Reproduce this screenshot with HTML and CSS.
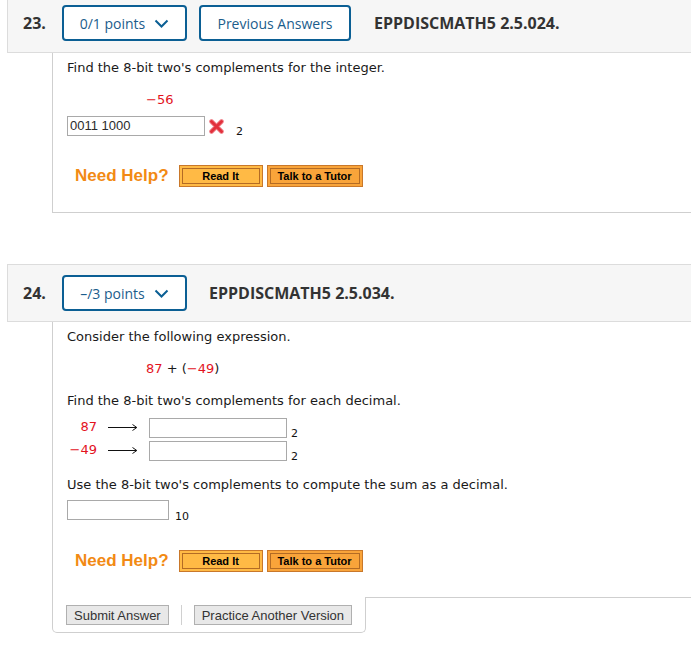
FILE: index.html
```html
<!DOCTYPE html>
<html>
<head>
<meta charset="utf-8">
<link rel="stylesheet" href="styles.css">
</head>
<body>
<div class="page">

  <div class="question first">
    <div class="qhead">
      <span class="qnum">23.</span>
      <button class="hbtn pts">0/1 points <svg class="chev" width="15" height="9" viewBox="0 0 15 9"><path d="M1.5 1.5 L7.5 7.5 L13.5 1.5" fill="none" stroke="#0b5f94" stroke-width="2"/></svg></button>
      <button class="hbtn prev">Previous Answers</button>
      <span class="qcode">EPPDISCMATH5 2.5.024.</span>
    </div>
    <div class="qbody closed">
      <p class="line">Find the 8-bit two's complements for the integer.</p>
      <p class="line indent red">&minus;56</p>
      <div class="ansrow">
        <div class="inp filled">0011 1000</div>
        <svg class="xmark" width="15" height="15" viewBox="0 0 15 15"><path d="M2.5 2.5 L12.5 12.5 M12.5 2.5 L2.5 12.5" stroke="#f08890" stroke-width="4.6" stroke-linecap="round"/><path d="M2.5 2.5 L12.5 12.5 M12.5 2.5 L2.5 12.5" stroke="#e2303c" stroke-width="3" stroke-linecap="round"/></svg>
        <span class="sub wide">2</span>
      </div>
      <div class="help">
        <span class="needhelp">Need Help?</span>
        <span class="obtn read"><span>Read It</span></span>
        <span class="obtn tutor"><span>Talk to a Tutor</span></span>
      </div>
    </div>
  </div>

  <div class="question second">
    <div class="qhead">
      <span class="qnum">24.</span>
      <button class="hbtn pts">&ndash;/3 points <svg class="chev" width="15" height="9" viewBox="0 0 15 9"><path d="M1.5 1.5 L7.5 7.5 L13.5 1.5" fill="none" stroke="#0b5f94" stroke-width="2"/></svg></button>
      <span class="qcode">EPPDISCMATH5 2.5.034.</span>
    </div>
    <div class="qbody">
      <p class="line">Consider the following expression.</p>
      <p class="line indent"><span class="red">87</span> + (<span class="red">&minus;49</span>)</p>
      <p class="line">Find the 8-bit two's complements for each decimal.</p>
      <div class="convrows">
        <div class="conv">
          <span class="lbl red">87</span>
          <svg class="arrow" width="30" height="9" viewBox="0 0 30 9"><path d="M0 4.5 H28.5 M24.5 1.5 L28.8 4.5 L24.5 7.5" fill="none" stroke="#111" stroke-width="1"/></svg>
          <div class="inp"></div>
          <span class="sub">2</span>
        </div>
        <div class="conv">
          <span class="lbl red">&minus;49</span>
          <svg class="arrow" width="30" height="9" viewBox="0 0 30 9"><path d="M0 4.5 H28.5 M24.5 1.5 L28.8 4.5 L24.5 7.5" fill="none" stroke="#111" stroke-width="1"/></svg>
          <div class="inp"></div>
          <span class="sub">2</span>
        </div>
      </div>
      <p class="line use">Use the 8-bit two's complements to compute the sum as a decimal.</p>
      <div class="ansrow sumrow">
        <div class="inp short"></div>
        <span class="sub">10</span>
      </div>
      <div class="help help2">
        <span class="needhelp">Need Help?</span>
        <span class="obtn read"><span>Read It</span></span>
        <span class="obtn tutor"><span>Talk to a Tutor</span></span>
      </div>
    </div>
    <div class="qfoot">
      <div class="tab">
        <span class="gbtn">Submit Answer</span>
        <span class="sep"></span>
        <span class="gbtn">Practice Another Version</span>
      </div>
      <div class="rest"></div>
    </div>
  </div>

</div>
</body>
</html>
```

FILE: styles.css
```css
html, body {
  margin: 0;
  padding: 0;
  background: #fff;
  overflow: hidden;
}

.page {
  padding-left: 7px;
}

.question.first {
  margin-top: -5px;
}

.question.second {
  margin-top: 51px;
}

.qhead {
  display: flex;
  align-items: center;
  height: 56px;
  box-sizing: content-box;
  background: #f6f6f6;
  border: 1px solid #dcdcdc;
  border-right: none;
  padding-left: 15px;
  font-family: "Open Sans", sans-serif;
}

.question.first .qhead {
  height: 54px;
  padding-bottom: 2px;
}

.qnum {
  font-weight: bold;
  font-size: 16px;
  color: #333;
  width: 22px;
  margin-right: 17px;
}

.hbtn {
  display: flex;
  align-items: center;
  justify-content: center;
  height: 36px;
  box-sizing: border-box;
  border: 2px solid #0b5f94;
  border-radius: 4px;
  background: #fff;
  color: #1b5d8c;
  font-family: "Open Sans", sans-serif;
  font-size: 14px;
  padding: 0;
  margin-right: 12px;
}

.hbtn.pts {
  width: 125px;
}

.question.second .hbtn.pts {
  margin-right: 22px;
}

.chev {
  margin-left: 9px;
  margin-top: 1px;
}

.hbtn.prev {
  width: 152px;
  margin-right: 23px;
}

.qcode {
  font-weight: bold;
  font-size: 16px;
  color: #333;
}

.qbody {
  margin-left: 45px;
  border-left: 1px solid #cfcfcf;
  padding-left: 14px;
  padding-top: 7px;
  padding-bottom: 25px;
  font-family: Verdana, "DejaVu Sans", sans-serif;
  font-size: 13px;
  color: #1a1a1a;
}

.qbody.closed {
  border-bottom: 1px solid #cfcfcf;
}

.line {
  margin: 0 0 16px 0;
  line-height: 16px;
  white-space: nowrap;
}

.indent {
  padding-left: 79px;
}

.red {
  color: #e3131e;
}

.ansrow {
  display: flex;
  align-items: flex-start;
  height: 20px;
  margin-top: -8px;
}

.inp {
  width: 138px;
  height: 20px;
  box-sizing: border-box;
  border: 1px solid #a9a9a9;
  background: #fff;
}

.inp.filled {
  font-family: "Liberation Sans", Arial, sans-serif;
  font-size: 13px;
  line-height: 18px;
  color: #2b2b2b;
  padding-left: 2px;
}

.inp.short {
  width: 102px;
}

.xmark {
  margin-left: 4px;
  margin-top: 3px;
}

.sub {
  font-size: 11px;
  line-height: 12px;
  margin-left: 4px;
  margin-top: 10px;
  color: #111;
}

.sub.wide {
  margin-left: 12px;
}

.help {
  display: flex;
  align-items: center;
  margin-top: 29px;
  padding-left: 8px;
}

.help2 {
  margin-top: 30px;
}

.needhelp {
  font-family: "Liberation Sans", Arial, sans-serif;
  font-weight: bold;
  font-size: 17px;
  color: #f28a14;
  margin-right: 10px;
}

.obtn {
  display: flex;
  height: 22px;
  box-sizing: border-box;
  border: 1px solid #c9782a;
  padding: 2px;
  margin-right: 4px;
  background: #ffba45;
}

.obtn span {
  display: flex;
  align-items: center;
  justify-content: center;
  flex: 1;
  border: 1px solid #b36b24;
  font-family: "Liberation Sans", Arial, sans-serif;
  font-weight: bold;
  font-size: 11px;
  color: #000;
}

.obtn.read {
  width: 84px;
}

.obtn.tutor {
  width: 96px;
  background: #f9a43a;
}

.convrows {
  margin-top: -7px;
  display: flex;
  flex-direction: column;
  gap: 3px;
}

.conv {
  display: flex;
  align-items: flex-start;
  height: 20px;
}

.lbl {
  width: 30px;
  text-align: right;
  line-height: 16px;
  margin-top: 1px;
}

.arrow {
  margin-left: 11px;
  margin-top: 5px;
  margin-right: 11px;
}

.line.use {
  margin-top: 16px;
}

.sumrow {
  margin-top: -9px;
}

.sumrow .sub {
  margin-left: 6px;
  margin-top: 11px;
}

.qfoot {
  display: flex;
  margin-left: 45px;
}

.tab {
  display: flex;
  align-items: center;
  border: 1px solid #cfcfcf;
  border-top: none;
  border-radius: 0 0 5px 5px;
  padding: 8px 13px 7px 13px;
}

.rest {
  flex: 1;
  border-top: 1px solid #cfcfcf;
}

.gbtn {
  display: flex;
  align-items: center;
  height: 20px;
  box-sizing: border-box;
  padding: 0 7px;
  background: #e8e8e8;
  border: 1px solid #b0b0b0;
  font-family: "Liberation Sans", Arial, sans-serif;
  font-size: 13px;
  color: #333;
}

.sep {
  width: 1px;
  height: 20px;
  background: #d0d0d0;
  margin: 0 12px 0 12px;
}
```
